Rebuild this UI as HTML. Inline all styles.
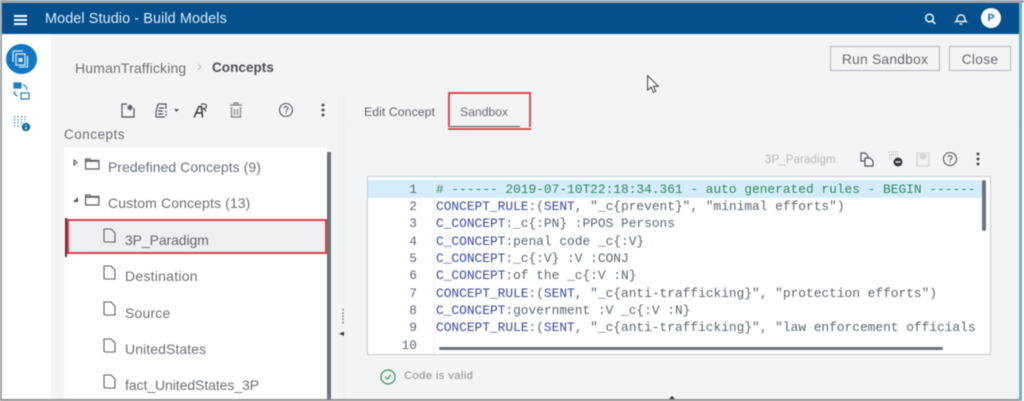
<!DOCTYPE html>
<html><head><meta charset="utf-8">
<style>
html,body{margin:0;padding:0;background:#fff}
#p{position:relative;width:1024px;height:401px;overflow:hidden;background:#fff;font-family:"Liberation Sans",sans-serif;filter:blur(.45px)}
#p div,#p span.a{position:absolute;white-space:nowrap}
.t{color:#5f646b;font-size:14px;line-height:18px}
.c{font-family:"Liberation Mono",monospace;font-size:12.85px;line-height:17.33px;color:#5d6770;left:436px;white-space:pre;top:0}
.k{color:#3a4aa0}
.n{font-family:"Liberation Mono",monospace;font-size:12.85px;line-height:17.33px;color:#5f6870;left:367px;width:50px;text-align:right}
svg{position:absolute;overflow:visible}
</style></head><body><div id="p">
<div style="left:0;top:0;width:1024px;height:3px;background:#9ea3a7"></div>
<div style="left:0;top:0;width:2px;height:401px;background:#9ea3a7"></div>
<div style="left:0;top:399px;width:1019px;height:2px;background:#8e9296"></div>
<div style="left:1019px;top:3px;width:3px;height:398px;background:#6fb0cc"></div>
<div style="left:2px;top:3px;width:1017px;height:31px;background:#03508c"></div>
<div style="left:51px;top:34px;width:968px;height:365px;background:#f3f4f6"></div>

<svg style="left:14px;top:15px" width="14" height="10"><path d="M0 1h13M0 5h13M0 9h13" stroke="#fff" stroke-width="2"/></svg>
<div style="left:45px;top:10px;color:#dcebf5;font-size:14.4px;line-height:18px;letter-spacing:.1px">Model Studio - Build Models</div>
<svg style="left:924px;top:12px" width="14" height="14" fill="none" stroke="#e6f0f7" stroke-width="1.6"><circle cx="5.5" cy="6" r="3.8"/><path d="M8.3 9l3 3"/></svg>
<svg style="left:954px;top:12px" width="14" height="14" fill="none" stroke="#e6f0f7" stroke-width="1.4"><path d="M2 9.5c1.5-1 1.2-2.5 1.5-4 .3-1.6 1.7-2.5 3.5-2.5s3.2.9 3.5 2.5c.3 1.5 0 3 1.5 4z"/><path d="M5.5 12h3"/></svg>
<div style="left:981px;top:8px;width:20px;height:20px;border-radius:50%;background:#fff;color:#0b6cb5;font-size:10.5px;font-weight:bold;line-height:20px;text-align:center">P</div>

<div style="left:6px;top:44px;width:31px;height:30px;border-radius:50%;background:#0f77c4"></div>
<svg style="left:12px;top:50px" width="20" height="20" fill="none" stroke="#d5e8f6" stroke-width="1.3"><path d="M1 12V2.500C1 1.500 1.500 1 2.500 1H11"/><rect x="4" y="4" width="9" height="11"/><path d="M15.500 6v11H7"/><rect x="6.500" y="8" width="4" height="4" fill="#d5e8f6" stroke="none"/></svg>
<svg style="left:13px;top:83px" width="18" height="17" fill="none" stroke="#1c7cc4" stroke-width="1.2"><rect x="1" y="0" width="7" height="5" fill="#1c7cc4"/><rect x="8" y="10" width="8" height="6"/><path d="M10 1.500l3.500 2.500v3M1.500 8v3l3 2"/></svg>
<svg style="left:13px;top:115px" width="18" height="17"><path d="M1.500 1v11M5 1v11M8.500 1v8M12 1v6" stroke="#5f9fd0" stroke-width="1.5" stroke-dasharray="1.5 1.5"/><circle cx="13" cy="12" r="4.300" fill="#1c6fb0"/><path d="M13 10v.8M13 12v2.500" stroke="#fff" stroke-width="1.2"/></svg>

<div class="t" style="left:75px;top:59px;font-size:14px;color:#6d7278;letter-spacing:.15px">HumanTrafficking</div>
<svg style="left:197px;top:63px" width="6" height="8" fill="none" stroke="#b5b9bd" stroke-width="1"><path d="M1 1l3 3-3 3"/></svg>
<div class="t" style="left:212px;top:59px;font-size:13.5px;font-weight:bold;color:#4b5057;letter-spacing:.05px">Concepts</div>

<svg style="left:121px;top:103px" width="15" height="15" fill="none" stroke="#50565e" stroke-width="1.2"><path d="M6 1H1v13h12V5"/><path d="M9 1.500v6M6 4.500h6M7 2.500l4 4M11 2.500l-4 4" stroke-width="1.1"/></svg>
<svg style="left:155px;top:103px" width="24" height="15" fill="none" stroke="#50565e" stroke-width="1.2"><path d="M3 1h8v5M1 14V9l2-8M1 14h9M4 5h5M3 8h5M3 11h5"/><path d="M11 8v1.500M11 11v1.500" stroke-width="1.6"/><path d="M19 6h5l-2.500 3z" fill="#50565e" stroke="none"/></svg>
<svg style="left:193px;top:103px" width="15" height="15" fill="none" stroke="#33383e" stroke-width="1.5"><path d="M1 14.500L6 3.500h2.500L9.500 14.500M3 10h6"/><path d="M8 1h3.500c2.500 0 2.500 4.500 0 4.500H9.500" stroke-width="1.1"/><path d="M11 6l2 2.500" stroke-width="1.1"/></svg>
<svg style="left:230px;top:102px" width="13" height="16" fill="none" stroke="#7a8086" stroke-width="1.2"><path d="M0 3h12M4 3V1h4v2M1.500 5v10h9V5M4.500 7v6M7.500 7v6"/></svg>
<svg style="left:279px;top:103px" width="15" height="15" fill="none" stroke="#50565e" stroke-width="1.1"><circle cx="7" cy="7" r="6.500"/><path d="M5 5.500c0-1.300 1-2 2-2s2 .7 2 1.900c0 1.600-2 1.600-2 3.300M7 9.800v1.200"/></svg>
<svg style="left:321px;top:103px" width="4" height="14" fill="#4a4f56"><circle cx="2" cy="2" r="1.5"/><circle cx="2" cy="7" r="1.5"/><circle cx="2" cy="12" r="1.5"/></svg>

<div class="t" style="left:64px;top:126px;font-size:13.5px;color:#6a6f75;letter-spacing:.5px">Concepts</div>

<div style="left:64px;top:147px;width:263px;height:252px;background:#fff"></div>
<div style="left:327px;top:152px;width:4px;height:247px;background:#6b7380"></div>
<svg style="left:73px;top:159px" width="6" height="8" fill="none" stroke="#4d5259"><path d="M1 1l3 2.500-3 2.500z"/></svg>
<svg style="left:85px;top:158px" width="15" height="12" fill="none" stroke="#555a61" stroke-width="1.2"><path d="M.6 1h4.500v1.500h8.800v8.500H.6z"/><path d="M.6 3h13" stroke-width="1.6"/></svg>
<div class="t" style="left:108px;top:158px;color:#6b7076;letter-spacing:.05px">Predefined Concepts (9)</div>
<svg style="left:73px;top:197px" width="7" height="6" fill="#4d5259"><path d="M5 0v5H0z"/></svg>
<svg style="left:85px;top:194px" width="15" height="12" fill="none" stroke="#555a61" stroke-width="1.2"><path d="M.6 1h4.500v1.500h8.800v8.500H.6z"/><path d="M.6 3h13" stroke-width="1.6"/></svg>
<div class="t" style="left:108px;top:194px;color:#6b7076;letter-spacing:.12px">Custom Concepts (13)</div>

<div style="left:65px;top:218px;width:2px;height:39px;background:#7a1f35"></div>
<div style="left:67px;top:219px;width:256px;height:31px;background:#eeeff2;border:2px solid #d8434a"></div>
<svg style="left:103px;top:228px" width="13" height="15" fill="none" stroke="#5a5f66" stroke-width="1.1"><path d="M1 1h7l4 4v9H2.500C1.500 14 1 13.500 1 12.500z"/></svg>
<div class="t" style="left:125px;top:231px;color:#63686e;letter-spacing:-.1px">3P_Paradigm</div>
<svg style="left:103px;top:265px" width="13" height="15" fill="none" stroke="#5a5f66" stroke-width="1.1"><path d="M1 1h7l4 4v9H2.500C1.500 14 1 13.500 1 12.500z"/></svg>
<div class="t" style="left:125px;top:267px;color:#6b7076;letter-spacing:.25px">Destination</div>
<svg style="left:103px;top:301px" width="13" height="15" fill="none" stroke="#5a5f66" stroke-width="1.1"><path d="M1 1h7l4 4v9H2.500C1.500 14 1 13.500 1 12.500z"/></svg>
<div class="t" style="left:125px;top:304px;color:#6b7076;letter-spacing:.18px">Source</div>
<svg style="left:103px;top:338px" width="13" height="15" fill="none" stroke="#5a5f66" stroke-width="1.1"><path d="M1 1h7l4 4v9H2.500C1.500 14 1 13.500 1 12.500z"/></svg>
<div class="t" style="left:125px;top:340px;color:#6b7076;letter-spacing:.08px">UnitedStates</div>
<svg style="left:103px;top:374px" width="13" height="15" fill="none" stroke="#5a5f66" stroke-width="1.1"><path d="M1 1h7l4 4v9H2.500C1.500 14 1 13.500 1 12.500z"/></svg>
<div class="t" style="left:125px;top:376px;color:#6b7076;letter-spacing:-.07px">fact_UnitedStates_3P</div>

<div style="left:343px;top:96px;width:1px;height:303px;background:#eceef0"></div>
<svg style="left:338px;top:308px" width="8" height="26"><path d="M5 1v16" stroke="#555a61" stroke-width="1.2" stroke-dasharray="1.5 1.7"/><path d="M6 23.500V28L1 25.700z" fill="#3a3f45"/></svg>

<div class="t" style="left:364px;top:103px;font-size:12.3px;color:#5f646b;letter-spacing:.05px">Edit Concept</div>
<div class="t" style="left:460px;top:103px;font-size:12.3px;color:#6a6f75;letter-spacing:-.08px">Sandbox</div>
<div style="left:448px;top:92px;width:79px;height:34px;border:2px solid #dc4a4e"></div>
<div style="left:450px;top:126px;width:70px;height:1px;background:#50565e"></div>
<div style="left:344px;top:127px;width:675px;height:1px;background:#f0f1f3"></div>

<svg style="left:647px;top:75px" width="14" height="20" fill="#fff" stroke="#3c4045" stroke-width="1"><path d="M.6.600v14.500l3.500-3 2.300 5.300 2.400-1-2.300-5.200h4.700z"/></svg>

<div style="left:830px;top:46px;width:108px;height:23px;border:1px solid #aeb3b8;background:#f3f4f6;text-align:center;line-height:25px;color:#656a70;font-size:13.8px;letter-spacing:.25px">Run Sandbox</div>
<div style="left:949px;top:46px;width:60px;height:23px;border:1px solid #aeb3b8;background:#f3f4f6;text-align:center;line-height:25px;color:#656a70;font-size:13.8px;letter-spacing:.3px">Close</div>

<div class="t" style="left:765px;top:151px;font-size:11.5px;color:#b7babe;letter-spacing:.1px">3P_Paradigm</div>
<svg style="left:860px;top:152px" width="14" height="15" fill="none" stroke="#50565e" stroke-width="1.2"><path d="M5 9H1V1h4l3 3v2"/><path d="M5 6h5l3 3v5H5z"/></svg>
<svg style="left:888px;top:151px" width="16" height="16"><path d="M1 1h10M1 4h10M1 7h4" stroke="#a0a4a9" stroke-width="1" stroke-dasharray="1 1"/><circle cx="10" cy="11" r="4.500" fill="#33373c"/><path d="M7.500 11h5" stroke="#fff" stroke-width="1.4"/></svg>
<svg style="left:916px;top:152px" width="15" height="15" fill="none" stroke="#d5d7da" stroke-width="1.5"><path d="M4 1H1v13h12V1h-3"/><circle cx="7" cy="4" r="3" fill="#d5d7da"/></svg>
<svg style="left:943px;top:152px" width="15" height="15" fill="none" stroke="#50565e" stroke-width="1.1"><circle cx="7" cy="7" r="6.500"/><path d="M5 5.500c0-1.300 1-2 2-2s2 .7 2 1.900c0 1.600-2 1.600-2 3.300M7 9.800v1.200"/></svg>
<svg style="left:976px;top:152px" width="4" height="14" fill="#4a4f56"><circle cx="2" cy="2" r="1.5"/><circle cx="2" cy="7" r="1.5"/><circle cx="2" cy="12" r="1.5"/></svg>

<div style="left:367px;top:176px;width:622px;height:177px;background:#fff;border:1px solid #c6c9cd"></div>
<div style="left:368px;top:180px;width:618px;height:18px;background:#d4ecfa"></div>
<div style="left:434px;top:177px;width:1px;height:177px;background:#eceef0"></div>
<div class="n" style="top:180.500px">1</div><div class="n" style="top:197.800px">2</div><div class="n" style="top:215.200px">3</div><div class="n" style="top:232.500px">4</div><div class="n" style="top:249.800px">5</div><div class="n" style="top:267.200px">6</div><div class="n" style="top:284.500px">7</div><div class="n" style="top:301.800px">8</div><div class="n" style="top:319.200px">9</div><div class="n" style="top:336.500px">10</div>
<div class="c" style="top:180.500px;color:#2f8a5a"># ------ 2019-07-10T22:18:34.361 - auto generated rules - BEGIN ------</div>
<div class="c" style="top:197.800px"><span class="k">CONCEPT_RULE</span>:(<span class="k">SENT</span>, "_c{prevent}", "minimal efforts")</div>
<div class="c" style="top:215.200px"><span class="k">C_CONCEPT</span>:_c{:PN} :PPOS Persons</div>
<div class="c" style="top:232.500px"><span class="k">C_CONCEPT</span>:penal code _c{:V}</div>
<div class="c" style="top:249.800px"><span class="k">C_CONCEPT</span>:_c{:V} :V :CONJ</div>
<div class="c" style="top:267.200px"><span class="k">C_CONCEPT</span>:of the _c{:V :N}</div>
<div class="c" style="top:284.500px"><span class="k">CONCEPT_RULE</span>:(<span class="k">SENT</span>, "_c{anti-trafficking}", "protection efforts")</div>
<div class="c" style="top:301.800px"><span class="k">C_CONCEPT</span>:government :V _c{:V :N}</div>
<div class="c" style="top:319.200px"><span class="k">CONCEPT_RULE</span>:(<span class="k">SENT</span>, "_c{anti-trafficking}", "law enforcement officials</div>
<div style="left:982px;top:180px;width:4px;height:51px;background:#6b7380;border-radius:2px"></div>
<div style="left:439px;top:347px;width:504px;height:3px;background:#6b7380;border-radius:2px"></div>

<svg style="left:380px;top:369px" width="16" height="16" fill="none" stroke="#2e9a5c" stroke-width="1.2"><circle cx="8" cy="8" r="7"/><path d="M5 8l2.300 2.300L11 6"/></svg>
<div class="t" style="left:404px;top:367px;font-size:11.3px;color:#8a8f94;letter-spacing:.35px">Code is valid</div>
<svg style="left:669px;top:396px" width="6" height="3" fill="#2a2e33"><path d="M3 0l3 3H0z"/></svg>
</div></body></html>
